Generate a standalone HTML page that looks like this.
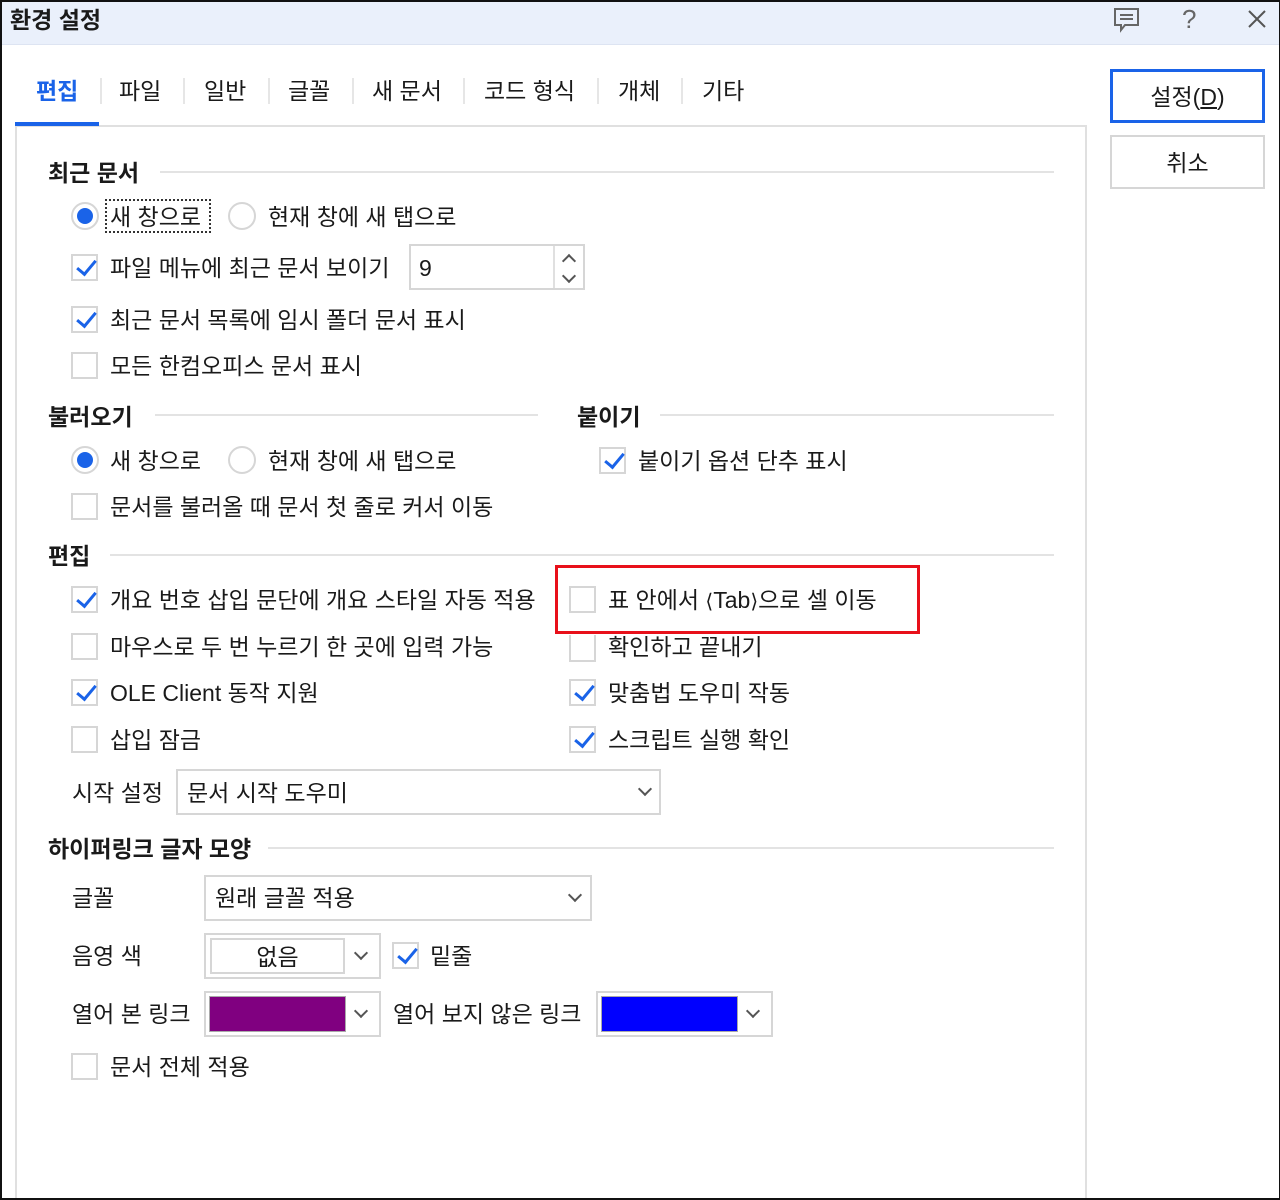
<!DOCTYPE html>
<html><head><meta charset="utf-8">
<style>
*{margin:0;padding:0;box-sizing:border-box}
body{width:1280px;height:1200px;position:relative;background:#fff;font-family:"Liberation Sans","Noto Sans CJK KR",sans-serif;color:#1a1a1a;overflow:hidden}
.a{position:absolute}
.t{position:absolute;height:30px;line-height:30px;font-size:23px;white-space:nowrap;margin-top:1px}
.h{font-weight:bold;font-size:23px}
.ln{position:absolute;height:2px;background:#e3e3e3}
.cb{position:absolute;width:27px;height:27px;border:2px solid #d6d6d6;background:#fff}
.cb.on::after{content:"";position:absolute;left:8px;top:0px;width:8px;height:16px;border:solid #1a63e8;border-width:0 3px 3px 0;transform:rotate(40deg)}
.rd{position:absolute;width:28px;height:28px;border:2px solid #d6d6d6;border-radius:50%;background:#fff}
.rd.on::after{content:"";position:absolute;left:4px;top:4px;width:16px;height:16px;border-radius:50%;background:#1a63e8}
.box{position:absolute;border:2px solid #d6d6d6;background:#fff}
.chev{position:absolute;width:10px;height:10px;border:solid #555;border-width:0 2px 2px 0;transform:rotate(45deg)}
.sep{position:absolute;top:78px;width:2px;height:26px;background:#e6e6e6}
.br{font-family:"DejaVu Sans",sans-serif;font-size:20px}
</style></head><body>
<div class="a" style="left:0;top:0;width:1280px;height:1200px;border:2px solid #111;border-right-width:1px"></div>
<div class="a" style="left:2px;top:2px;width:1277px;height:43px;background:#eaf0fb;border-bottom:1px solid #dde4f2"></div>
<div class="t h" style="left:10px;top:4px">환경 설정</div>
<svg class="a" style="left:1113px;top:7px" width="28" height="26" viewBox="0 0 28 26"><path d="M2 2h23v16H12l-4 5v-5H2z" fill="none" stroke="#666" stroke-width="2"/><path d="M7 8h13M7 12h13" stroke="#666" stroke-width="2"/></svg>
<div class="t" style="left:1182px;top:3px;font-size:26px;color:#666">?</div>
<svg class="a" style="left:1247px;top:9px" width="20" height="20"><path d="M2 2L18 18M18 2L2 18" stroke="#555" stroke-width="2"/></svg>

<div class="t h" style="left:36px;top:75px;color:#1a63e8">편집</div>
<div class="sep" style="left:100px"></div>
<div class="t" style="left:119px;top:75px">파일</div>
<div class="sep" style="left:183px"></div>
<div class="t" style="left:204px;top:75px">일반</div>
<div class="sep" style="left:268px"></div>
<div class="t" style="left:288px;top:75px">글꼴</div>
<div class="sep" style="left:352px"></div>
<div class="t" style="left:372px;top:75px">새 문서</div>
<div class="sep" style="left:463px"></div>
<div class="t" style="left:484px;top:75px">코드 형식</div>
<div class="sep" style="left:597px"></div>
<div class="t" style="left:618px;top:75px">개체</div>
<div class="sep" style="left:681px"></div>
<div class="t" style="left:702px;top:75px">기타</div>

<div class="a" style="left:15px;top:125px;width:1072px;height:1073px;border:2px solid #e0e0e0;border-bottom:none"></div>
<div class="a" style="left:15px;top:122px;width:84px;height:4px;background:#1a63e8"></div>

<div class="a" style="left:1110px;top:69px;width:155px;height:54px;border:3px solid #1a63e8;text-align:center;line-height:50px;font-size:23px">설정(<u>D</u>)</div>
<div class="a" style="left:1110px;top:135px;width:155px;height:54px;border:2px solid #d6d6d6;text-align:center;line-height:52px;font-size:23px">취소</div>

<div class="t h" style="left:48px;top:157px">최근 문서</div>
<div class="ln" style="left:160px;top:171px;width:894px"></div>
<div class="rd on" style="left:71px;top:202px"></div>
<div class="a" style="left:105px;top:199px;width:106px;height:34px;border:2px dotted #333"></div>
<div class="t" style="left:110px;top:201px">새 창으로</div>
<div class="rd" style="left:228px;top:202px"></div>
<div class="t" style="left:268px;top:201px">현재 창에 새 탭으로</div>
<div class="cb on" style="left:71px;top:254px"></div>
<div class="t" style="left:110px;top:252px">파일 메뉴에 최근 문서 보이기</div>
<div class="box" style="left:409px;top:244px;width:176px;height:46px"></div>
<div class="a" style="left:553px;top:246px;width:2px;height:42px;background:#e0e0e0"></div>
<div class="t" style="left:419px;top:252px">9</div>
<div class="chev" style="left:564px;top:256px;transform:rotate(225deg)"></div>
<div class="chev" style="left:564px;top:271px"></div>
<div class="cb on" style="left:71px;top:306px"></div>
<div class="t" style="left:110px;top:304px">최근 문서 목록에 임시 폴더 문서 표시</div>
<div class="cb" style="left:71px;top:352px"></div>
<div class="t" style="left:110px;top:350px">모든 한컴오피스 문서 표시</div>

<div class="t h" style="left:48px;top:401px">불러오기</div>
<div class="ln" style="left:155px;top:414px;width:383px"></div>
<div class="t h" style="left:577px;top:401px">붙이기</div>
<div class="ln" style="left:660px;top:414px;width:394px"></div>
<div class="rd on" style="left:71px;top:446px"></div>
<div class="t" style="left:110px;top:445px">새 창으로</div>
<div class="rd" style="left:228px;top:446px"></div>
<div class="t" style="left:268px;top:445px">현재 창에 새 탭으로</div>
<div class="cb on" style="left:599px;top:447px"></div>
<div class="t" style="left:638px;top:445px">붙이기 옵션 단추 표시</div>
<div class="cb" style="left:71px;top:493px"></div>
<div class="t" style="left:110px;top:491px">문서를 불러올 때 문서 첫 줄로 커서 이동</div>

<div class="t h" style="left:48px;top:540px">편집</div>
<div class="ln" style="left:110px;top:554px;width:944px"></div>
<div class="cb on" style="left:71px;top:586px"></div>
<div class="t" style="left:110px;top:584px">개요 번호 삽입 문단에 개요 스타일 자동 적용</div>
<div class="cb" style="left:569px;top:586px"></div>
<div class="t" style="left:608px;top:584px">표 안에서 <span class="br">⟨</span>Tab<span class="br">⟩</span>으로 셀 이동</div>
<div class="a" style="left:555px;top:565px;width:365px;height:69px;border:3px solid #e8101a"></div>
<div class="cb" style="left:71px;top:633px"></div>
<div class="t" style="left:110px;top:631px">마우스로 두 번 누르기 한 곳에 입력 가능</div>
<div class="cb" style="left:569px;top:635px;border-top:none"></div>
<div class="t" style="left:608px;top:631px">확인하고 끝내기</div>
<div class="cb on" style="left:71px;top:679px"></div>
<div class="t" style="left:110px;top:677px">OLE Client 동작 지원</div>
<div class="cb on" style="left:569px;top:679px"></div>
<div class="t" style="left:608px;top:677px">맞춤법 도우미 작동</div>
<div class="cb" style="left:71px;top:726px"></div>
<div class="t" style="left:110px;top:724px">삽입 잠금</div>
<div class="cb on" style="left:569px;top:726px"></div>
<div class="t" style="left:608px;top:724px">스크립트 실행 확인</div>
<div class="t" style="left:72px;top:777px">시작 설정</div>
<div class="box" style="left:176px;top:769px;width:485px;height:46px"></div>
<div class="t" style="left:187px;top:777px">문서 시작 도우미</div>
<div class="chev" style="left:640px;top:784px"></div>

<div class="t h" style="left:48px;top:833px">하이퍼링크 글자 모양</div>
<div class="ln" style="left:268px;top:847px;width:786px"></div>
<div class="t" style="left:72px;top:882px">글꼴</div>
<div class="box" style="left:204px;top:875px;width:388px;height:46px"></div>
<div class="t" style="left:215px;top:882px">원래 글꼴 적용</div>
<div class="chev" style="left:570px;top:890px"></div>

<div class="t" style="left:72px;top:940px">음영 색</div>
<div class="box" style="left:204px;top:933px;width:177px;height:46px"></div>
<div class="box" style="left:210px;top:938px;width:135px;height:36px"></div>
<div class="t" style="left:210px;top:941px;width:135px;text-align:center">없음</div>
<div class="chev" style="left:356px;top:948px"></div>
<div class="cb on" style="left:392px;top:942px"></div>
<div class="t" style="left:430px;top:940px">밑줄</div>

<div class="t" style="left:72px;top:998px">열어 본 링크</div>
<div class="box" style="left:204px;top:991px;width:177px;height:46px"></div>
<div class="a" style="left:209px;top:996px;width:137px;height:36px;background:#800080;border:1px solid #aaa"></div>
<div class="chev" style="left:356px;top:1006px"></div>
<div class="t" style="left:393px;top:998px">열어 보지 않은 링크</div>
<div class="box" style="left:596px;top:991px;width:177px;height:46px"></div>
<div class="a" style="left:601px;top:996px;width:137px;height:36px;background:#0000ff;border:1px solid #aaa"></div>
<div class="chev" style="left:748px;top:1006px"></div>

<div class="cb" style="left:71px;top:1053px"></div>
<div class="t" style="left:110px;top:1051px">문서 전체 적용</div>
</body></html>
